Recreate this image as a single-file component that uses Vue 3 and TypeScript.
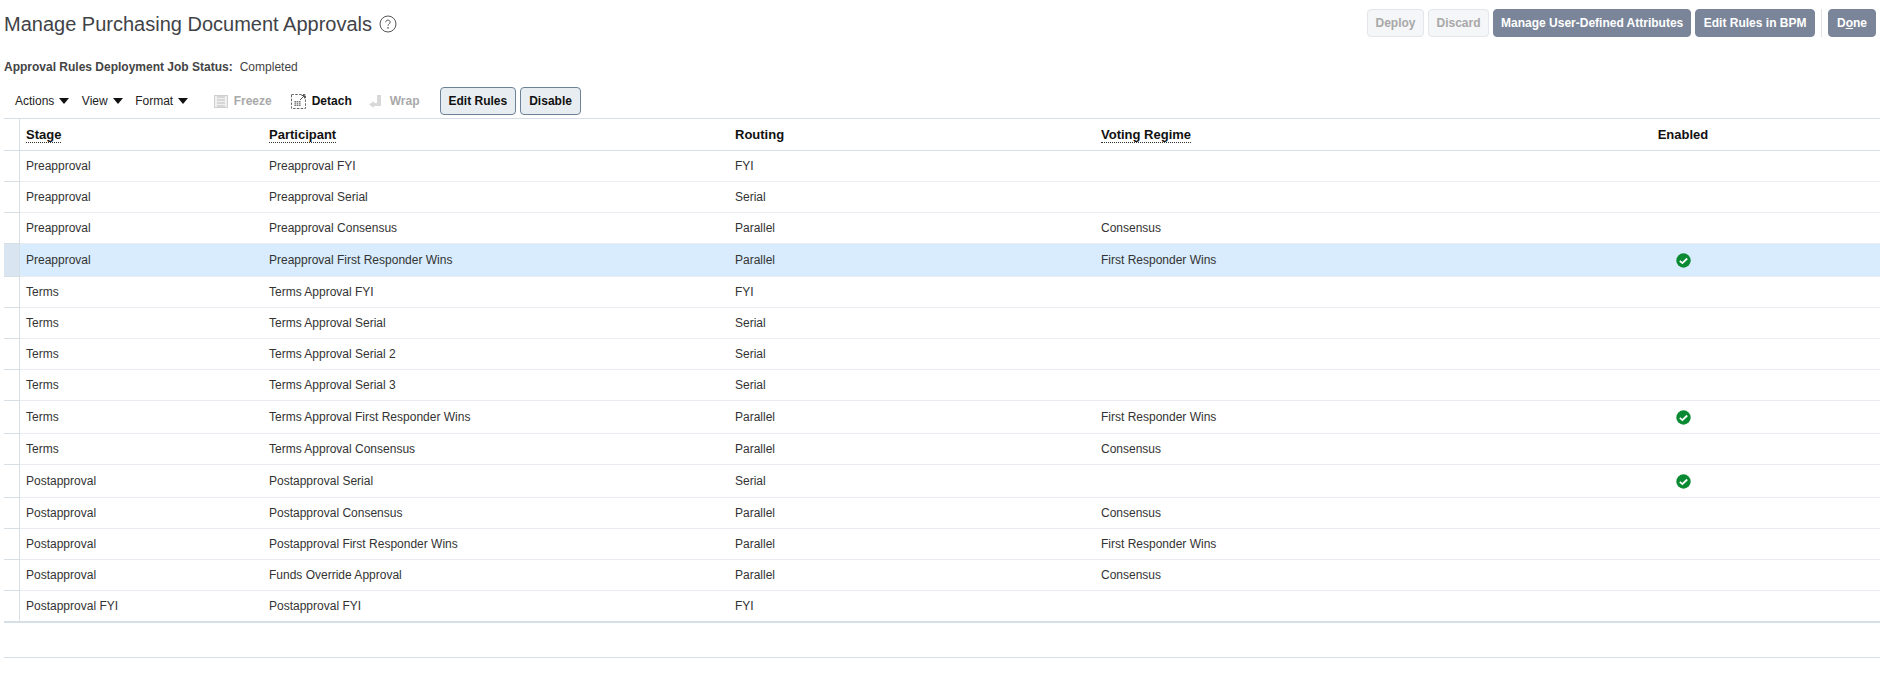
<script setup lang="ts">
interface Row { stage: string; participant: string; routing: string; regime: string; enabled: boolean; selected?: boolean }
const rows: Row[] = [
  { stage: 'Preapproval', participant: 'Preapproval FYI', routing: 'FYI', regime: '', enabled: false },
  { stage: 'Preapproval', participant: 'Preapproval Serial', routing: 'Serial', regime: '', enabled: false },
  { stage: 'Preapproval', participant: 'Preapproval Consensus', routing: 'Parallel', regime: 'Consensus', enabled: false },
  { stage: 'Preapproval', participant: 'Preapproval First Responder Wins', routing: 'Parallel', regime: 'First Responder Wins', enabled: true, selected: true },
  { stage: 'Terms', participant: 'Terms Approval FYI', routing: 'FYI', regime: '', enabled: false },
  { stage: 'Terms', participant: 'Terms Approval Serial', routing: 'Serial', regime: '', enabled: false },
  { stage: 'Terms', participant: 'Terms Approval Serial 2', routing: 'Serial', regime: '', enabled: false },
  { stage: 'Terms', participant: 'Terms Approval Serial 3', routing: 'Serial', regime: '', enabled: false },
  { stage: 'Terms', participant: 'Terms Approval First Responder Wins', routing: 'Parallel', regime: 'First Responder Wins', enabled: true },
  { stage: 'Terms', participant: 'Terms Approval Consensus', routing: 'Parallel', regime: 'Consensus', enabled: false },
  { stage: 'Postapproval', participant: 'Postapproval Serial', routing: 'Serial', regime: '', enabled: true },
  { stage: 'Postapproval', participant: 'Postapproval Consensus', routing: 'Parallel', regime: 'Consensus', enabled: false },
  { stage: 'Postapproval', participant: 'Postapproval First Responder Wins', routing: 'Parallel', regime: 'First Responder Wins', enabled: false },
  { stage: 'Postapproval', participant: 'Funds Override Approval', routing: 'Parallel', regime: 'Consensus', enabled: false },
  { stage: 'Postapproval FYI', participant: 'Postapproval FYI', routing: 'FYI', regime: '', enabled: false },
]
</script>

<template>
  <div class="page">
    <header class="head">
      <div class="title-wrap">
        <h1 class="title">Manage Purchasing Document Approvals</h1>
        <svg class="help" width="18" height="18" viewBox="0 0 18 18" aria-hidden="true">
          <circle cx="9" cy="9" r="8" fill="none" stroke="#555" stroke-width="1" />
          <path d="M6.8 7.2c0-1.4 1-2.1 2.2-2.1s2.2.8 2.2 2c0 1.8-2.2 1.7-2.2 3.6" fill="none" stroke="#555" stroke-width="1" />
          <circle cx="9" cy="12.9" r=".8" fill="#555" />
        </svg>
      </div>
      <div class="actions">
        <button class="btn off">Deploy</button>
        <button class="btn off">Discard</button>
        <button class="btn dark tight">Manage User-Defined Attributes</button>
        <button class="btn dark snug">Edit Rules in BPM</button>
        <span class="sep"></span>
        <button class="btn dark">D<u>o</u>ne</button>
      </div>
    </header>

    <div class="status"><b>Approval Rules Deployment Job Status:</b><span>Completed</span></div>

    <div class="toolbar">
      <span class="menu">Actions<i class="tri"></i></span>
      <span class="menu">View<i class="tri"></i></span>
      <span class="menu">Format<i class="tri"></i></span>
      <span class="tool muted t-freeze">
        <svg width="14" height="13" viewBox="0 0 14 13" aria-hidden="true">
          <rect x=".5" y=".5" width="13" height="12" fill="#f0f0f0" stroke="#cfcfcf" />
          <path d="M4 1v11M6 1v11M8 1v11M10 1v11" stroke="#bdbdbd" stroke-width="1" stroke-dasharray="2 1" />
        </svg>
        Freeze
      </span>
      <span class="tool t-detach">
        <svg width="15" height="15" viewBox="0 0 15 15" aria-hidden="true">
          <rect x=".5" y=".5" width="14" height="14" fill="none" stroke="#666" stroke-dasharray="2.4 1.4" />
          <rect x="3.5" y="7" width="6" height="5" fill="#777" />
          <path d="M3.5 8.7h6M3.5 10.3h6M5.5 7v5M7.5 7v5" stroke="#fff" stroke-width=".6" />
          <path d="M9 6l4-4M10.5 1.5H13.5V4.5" fill="none" stroke="#555" />
        </svg>
        Detach
      </span>
      <span class="tool muted t-wrap">
        <svg width="14" height="14" viewBox="0 0 14 14" aria-hidden="true">
          <path d="M9 1h4v11H6v2L1 10.5 6 7v2h3z" fill="#d8d8d8" />
        </svg>
        Wrap
      </span>
      <button class="btn light">Edit Rules</button>
      <button class="btn light">Disable</button>
    </div>

    <div class="table">
      <div class="row hdr">
        <div class="gutter"></div>
        <div class="cell c1"><span class="sort">Stage</span></div>
        <div class="cell c2"><span class="sort">Participant</span></div>
        <div class="cell c3">Routing</div>
        <div class="cell c4"><span class="sort">Voting Regime</span></div>
        <div class="cell c5">Enabled</div>
      </div>
      <div v-for="(r, i) in rows" :key="i" class="row" :class="{ sel: r.selected, tall: r.enabled }">
        <div class="gutter"></div>
        <div class="cell c1">{{ r.stage }}</div>
        <div class="cell c2">{{ r.participant }}</div>
        <div class="cell c3">{{ r.routing }}</div>
        <div class="cell c4">{{ r.regime }}</div>
        <div class="cell c5">
          <svg v-if="r.enabled" width="15" height="15" viewBox="0 0 15 15" aria-hidden="true">
            <circle cx="7.5" cy="7.5" r="7.2" fill="#0a8a32" />
            <path d="M3.8 7.8l2.6 2.3 4.8-4.6" fill="none" stroke="#fff" stroke-width="1.8" />
          </svg>
        </div>
      </div>
    </div>
    <div class="foot"></div>
  </div>
</template>

<style>
html, body { margin: 0; background: #fff; }
</style>

<style scoped>
.page {
  width: 1889px;
  height: 686px;
  overflow: hidden;
  font-family: "Liberation Sans", Arial, sans-serif;
  font-size: 12px;
  color: #333;
  padding: 8px 9px 0 4px;
  box-sizing: border-box;
}
.head { display: flex; justify-content: space-between; height: 30px; padding-right: 4px; }
.title-wrap { display: flex; align-items: center; gap: 7px; height: 32px; }
.title { margin: 0; font-size: 20px; font-weight: 400; color: #3f4347; }
.actions { display: flex; align-items: flex-start; gap: 4px; margin-top: 1px; }
.btn {
  font: bold 12px "Liberation Sans", Arial, sans-serif;
  height: 28px;
  border-radius: 4px;
  padding: 0 8px;
  box-sizing: border-box;
}
.off { background: #f5f6f8; border: 1px solid #e3e6ea; color: #a8a8a8; padding: 0 7.5px; }
.dark { background: #7b8599; border: 1px solid #7b8599; color: #fff; }
.tight { padding: 0 7px; }
.snug { padding: 0 7.5px; }
.sep { width: 1px; height: 28px; background: #dfe3e8; margin: 0 2px; }
.status { display: flex; gap: 7px; margin-top: 21px; height: 16px; line-height: 16px; color: #444; }
.toolbar { display: flex; align-items: center; height: 30px; margin-top: 11px; color: #222; }
.menu { display: inline-flex; align-items: center; gap: 5px; margin-left: 11px; margin-right: 1.5px; }
.tri { width: 0; height: 0; border-left: 5px solid transparent; border-right: 5px solid transparent; border-top: 6px solid #111; }
.tool { display: inline-flex; align-items: center; gap: 6px; font-weight: bold; color: #111; }
.tool svg { flex: none; }
.t-freeze { margin-left: 24px; margin-right: 19px; }
.t-detach { margin-right: 16px; }
.t-wrap { gap: 8px; margin-right: 20px; }
.tool.muted { color: #a9a9a9; }
.light { background: #e8edf1; border: 1px solid #6d8296; color: #111; margin-right: 4px; }
.table { margin-top: 2px; border-top: 1px solid #d6dfe6; border-bottom: 2px solid #d6dfe6; }
.row { display: flex; height: 30px; border-bottom: 1px solid #e9edf1; align-items: stretch; }
.row:last-child { border-bottom: none; height: 30px; }
.hdr { height: 31px; border-bottom: 1px solid #d6dfe6; font-weight: bold; font-size: 13px; color: #111; }
.tall { height: 32px; }
.sel { background: #d8ecfd; }
.gutter { width: 15px; border-right: 1px solid #d6dfe6; flex: none; box-shadow: 0 1px 0 #d6dfe6; }
.sel .gutter { background: #d9e6f2; }
.cell { display: flex; align-items: center; padding-left: 5px; box-sizing: border-box; flex: none; }
.c1 { width: 244px; padding-left: 6px; }
.c2 { width: 466px; }
.c3 { width: 366px; }
.c4 { width: 527px; }
.c5 { width: 120px; justify-content: center; padding-left: 0; }
.sort { border-bottom: 1px dotted #333; line-height: 15px; }
.foot { margin-top: 34px; border-top: 1px solid #d6dfe6; }
</style>
